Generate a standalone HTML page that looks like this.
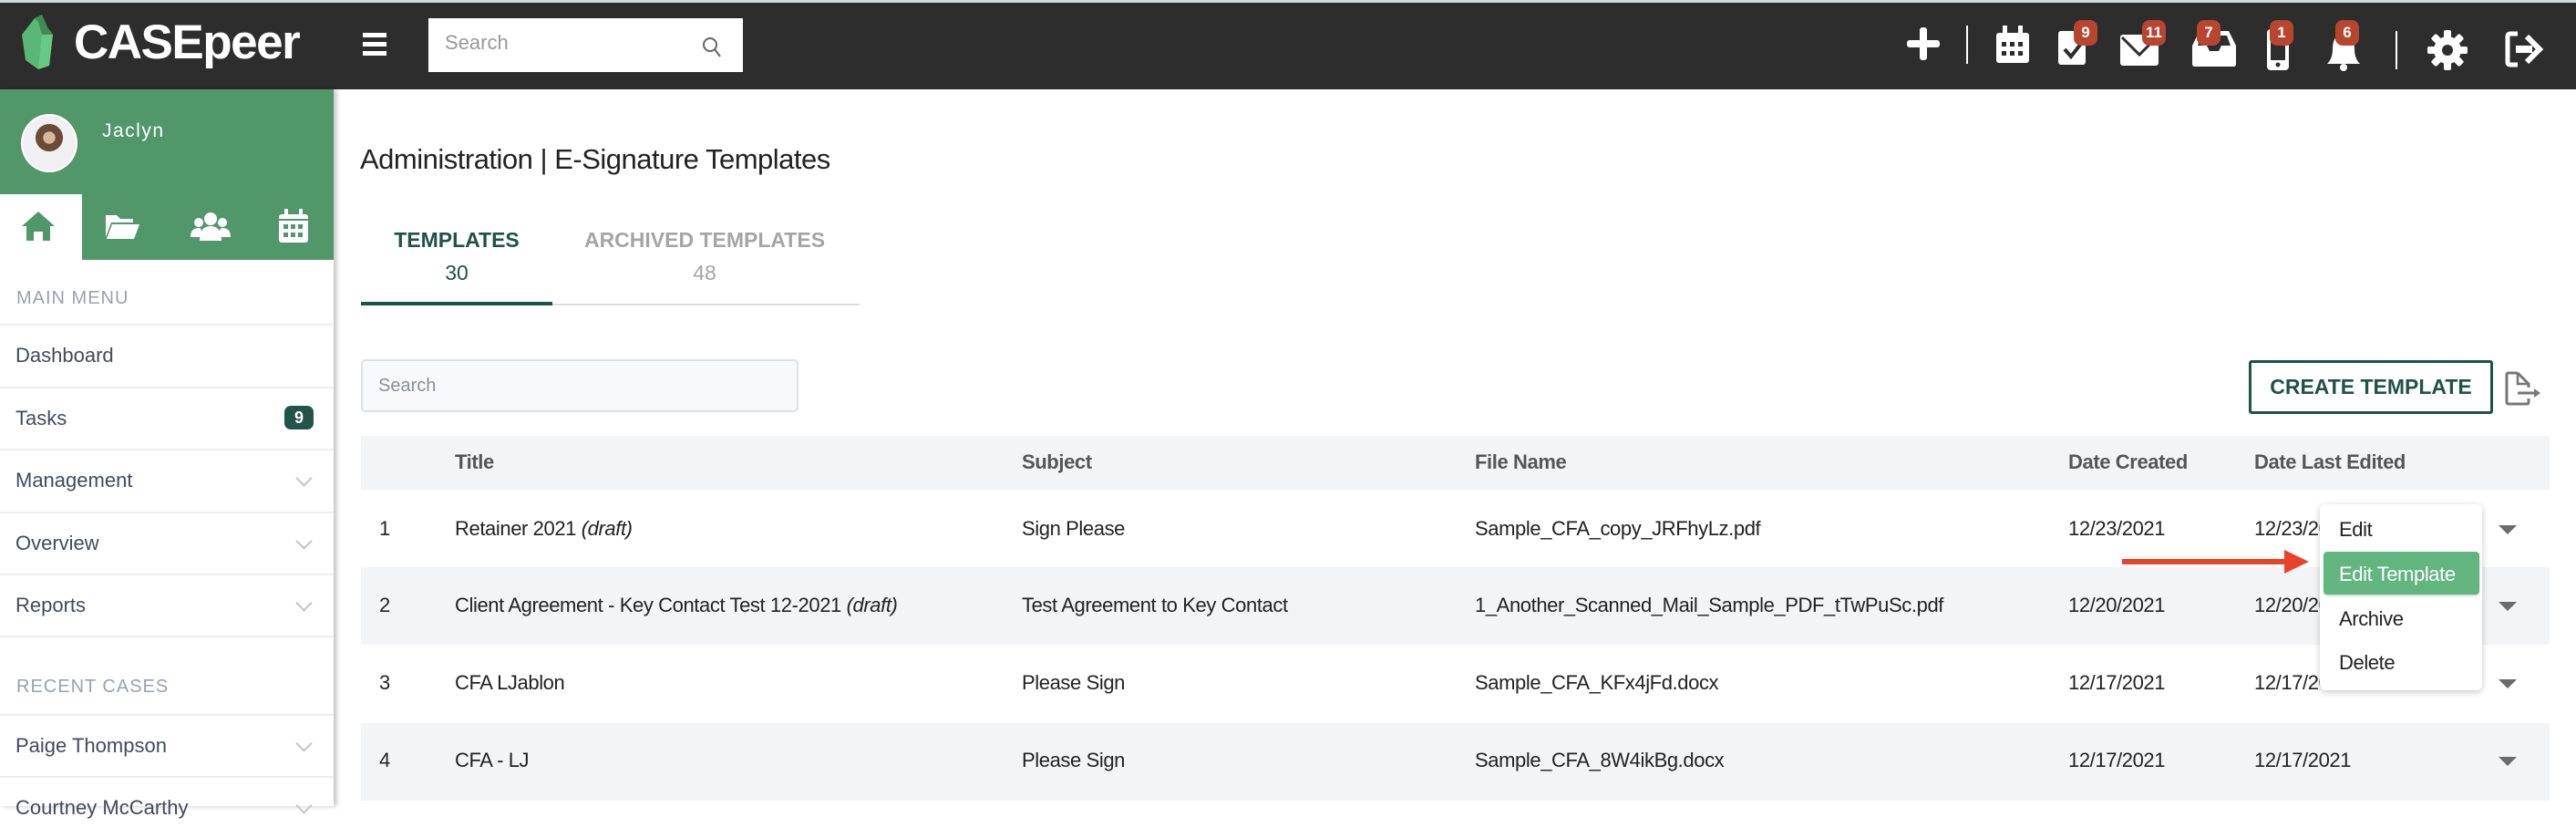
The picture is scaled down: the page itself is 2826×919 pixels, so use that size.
<!DOCTYPE html>
<html><head><meta charset="utf-8">
<style>
*{box-sizing:border-box;margin:0;padding:0}
body{width:2826px;height:884px;overflow:hidden;background:#fff;font-family:"Liberation Sans",sans-serif;position:relative}
.abs{position:absolute}
.hdr{left:0;top:0;width:2826px;height:98px;background:#2d2d2d;border-top:3px solid #cfd8d8}
.logo{left:81px;top:16px;color:#fff;font-size:53px;font-weight:bold;letter-spacing:-1.5px}
.srch{left:470px;top:20px;width:345px;height:59px;background:#fff}
.srch span{position:absolute;left:18px;top:14px;font-size:22px;color:#999}
.side{left:0;top:98px;width:366px;height:786px;background:#fff;box-shadow:3px 0 5px rgba(0,0,0,.25)}
.green{left:0;top:98px;width:366px;height:187px;background:#51976a}
.mi{position:absolute;left:0;width:366px;height:68px;border-top:2px solid #eceef1;font-size:22px;color:#434a5e;padding-left:17px;line-height:66px}
.lbl{position:absolute;left:18px;font-size:20px;color:#9aa1b4;letter-spacing:1px}
.chev{position:absolute;right:26px;top:24px;width:13px;height:13px;border-right:2px solid #c0c4cc;border-bottom:2px solid #c0c4cc;transform:rotate(45deg)}
.t{position:absolute;font-size:22px;color:#222;letter-spacing:-0.4px;white-space:nowrap}
.th{position:absolute;font-size:22px;color:#555;font-weight:bold;letter-spacing:-0.4px}
.car{position:absolute;left:2741px;width:0;height:0;border-left:10px solid transparent;border-right:10px solid transparent;border-top:10px solid #6b6b6b}
.badge{position:absolute;background:#b8452f;color:#fff;font-size:17px;font-weight:bold;border-radius:8px;height:28px;min-width:26px;text-align:center;line-height:28px;padding:0 4px}
</style></head><body>
<div class="abs hdr"></div>
<svg class="abs" style="left:22px;top:16px" width="44" height="62" viewBox="0 0 44 62"><polygon points="16,4 24,0 30,14 36,22 32,56 20,60 6,50 2,22" fill="#5bb874"/><polygon points="16,4 24,0 30,14 36,22 24,22 20,8" fill="#3f8d56"/><polygon points="24,22 36,22 32,56 20,60" fill="#68c985"/></svg>
<div class="abs logo">CASEpeer</div>
<div class="abs" style="left:398px;top:36px;width:26px;height:5px;background:#fff"></div>
<div class="abs" style="left:398px;top:46px;width:26px;height:5px;background:#fff"></div>
<div class="abs" style="left:398px;top:56px;width:26px;height:5px;background:#fff"></div>
<div class="abs srch"><span>Search</span><svg style="position:absolute;left:300px;top:20px" width="22" height="24"><circle cx="9" cy="9" r="7" stroke="#666" stroke-width="2" fill="none"/><line x1="14" y1="14" x2="20" y2="22" stroke="#666" stroke-width="2"/></svg></div>
<!-- right icons -->
<svg class="abs" style="left:2090px;top:28px" width="40" height="40"><rect x="16" y="2" width="8" height="36" rx="3" fill="#fff"/><rect x="2" y="16" width="36" height="8" rx="3" fill="#fff"/></svg>
<div class="abs" style="left:2157px;top:28px;width:2px;height:42px;background:#fff"></div>
<svg class="abs" style="left:2190px;top:28px" width="38" height="42"><rect x="0" y="8" width="36" height="33" rx="3" fill="#fff"/><rect x="7" y="0" width="5" height="10" fill="#fff"/><rect x="24" y="0" width="5" height="10" fill="#fff"/><g fill="#2d2d2d"><rect x="6" y="18" width="5" height="5"/><rect x="15" y="18" width="5" height="5"/><rect x="24" y="18" width="5" height="5"/><rect x="6" y="28" width="5" height="5"/><rect x="15" y="28" width="5" height="5"/><rect x="24" y="28" width="5" height="5"/></g></svg>
<svg class="abs" style="left:2258px;top:34px" width="36" height="38"><rect x="0" y="0" width="30" height="37" rx="3" fill="#fff"/><polyline points="7,20 14,28 28,10" stroke="#2d2d2d" stroke-width="4" fill="none"/></svg>
<div class="badge" style="left:2275px;top:22px">9</div>
<svg class="abs" style="left:2326px;top:38px" width="44" height="36"><rect x="0" y="0" width="42" height="34" rx="3" fill="#fff"/><polyline points="2,3 21,22 40,3" stroke="#2d2d2d" stroke-width="3" fill="none"/></svg>
<div class="badge" style="left:2350px;top:22px">11</div>
<svg class="abs" style="left:2405px;top:34px" width="48" height="40"><path d="M8 0 H40 L48 16 V36 Q48 39 45 39 H3 Q0 39 0 36 V16 Z" fill="#fff"/><path d="M10 5 H38 L42 16 H32 L29 22 H19 L16 16 H6 Z" fill="#2d2d2d"/></svg>
<div class="badge" style="left:2410px;top:22px">7</div>
<svg class="abs" style="left:2487px;top:32px" width="26" height="46"><rect x="0" y="0" width="24" height="45" rx="4" fill="#fff"/><rect x="4" y="6" width="16" height="28" fill="#2d2d2d"/><circle cx="12" cy="39" r="2.5" fill="#2d2d2d"/></svg>
<div class="badge" style="left:2490px;top:22px">1</div>
<svg class="abs" style="left:2553px;top:34px" width="36" height="44"><path d="M18 2 Q6 4 6 20 Q6 30 0 36 H36 Q30 30 30 20 Q30 4 18 2Z" fill="#fff"/><circle cx="18" cy="40" r="4" fill="#fff"/></svg>
<div class="badge" style="left:2562px;top:22px">6</div>
<div class="abs" style="left:2628px;top:34px;width:2px;height:42px;background:#fff"></div>
<svg class="abs" style="left:2663px;top:33px" width="44" height="44" viewBox="0 0 44 44"><g fill="#fff"><circle cx="22" cy="22" r="15"/><rect x="18" y="0" width="8" height="44" rx="2"/><rect x="0" y="18" width="44" height="8" rx="2"/><rect x="18" y="0" width="8" height="44" rx="2" transform="rotate(45 22 22)"/><rect x="18" y="0" width="8" height="44" rx="2" transform="rotate(-45 22 22)"/></g><circle cx="22" cy="22" r="6" fill="#2d2d2d"/></svg>
<svg class="abs" style="left:2748px;top:34px" width="44" height="40"><path d="M14 3 H6 Q3 3 3 6 V34 Q3 37 6 37 H14" stroke="#fff" stroke-width="5" fill="none"/><rect x="12" y="16" width="18" height="8" fill="#fff"/><polyline points="24,6 38,20 24,34" stroke="#fff" stroke-width="6" fill="none"/></svg>

<!-- sidebar -->
<div class="abs side"></div>
<div class="abs green"></div>
<div class="abs" style="left:23px;top:125px;width:62px;height:64px;border-radius:50%;background:radial-gradient(circle at 50% 40%,#d8b79c 0 14%,#6b4a38 15% 32%,#f0f0f2 33%);border:2px solid #fff"></div>
<div class="abs" style="left:112px;top:132px;font-size:21px;color:#fff;letter-spacing:1.5px">Jaclyn</div>
<div class="abs" style="left:0;top:213px;width:90px;height:72px;background:#fff"></div>
<svg class="abs" style="left:22px;top:230px" width="40" height="36"><path d="M20 2 L38 18 H33 V34 H25 V24 H15 V34 H7 V18 H2 Z" fill="#51976a"/></svg>
<svg class="abs" style="left:114px;top:232px" width="40" height="32"><path d="M2 4 H14 L18 8 H32 V12 H8 L2 28 Z" fill="#fff"/><path d="M9 14 H39 L33 30 H3 Z" fill="#fff"/></svg>
<svg class="abs" style="left:209px;top:232px" width="44" height="34"><g fill="#fff"><circle cx="22" cy="8" r="7"/><circle cx="9" cy="12" r="5"/><circle cx="35" cy="12" r="5"/><path d="M10 32 Q10 16 22 16 Q34 16 34 32Z"/><path d="M0 28 Q0 18 9 18 Q12 18 12 22 L10 28Z"/><path d="M44 28 Q44 18 35 18 Q32 18 32 22 L34 28Z"/></g></svg>
<svg class="abs" style="left:306px;top:229px" width="34" height="38"><rect x="0" y="6" width="32" height="31" rx="3" fill="#fff"/><rect x="6" y="0" width="4" height="9" fill="#fff"/><rect x="22" y="0" width="4" height="9" fill="#fff"/><g fill="#51976a"><rect x="0" y="11" width="32" height="2"/><rect x="5" y="17" width="5" height="5"/><rect x="13" y="17" width="5" height="5"/><rect x="21" y="17" width="5" height="5"/><rect x="5" y="26" width="5" height="5"/><rect x="13" y="26" width="5" height="5"/><rect x="21" y="26" width="5" height="5"/></g></svg>
<div class="lbl" style="top:316px">MAIN MENU</div>
<div class="mi" style="top:355px">Dashboard</div>
<div class="mi" style="top:424px">Tasks<span style="position:absolute;left:312px;top:19px;width:32px;height:26px;background:#22544a;border-radius:7px;color:#fff;font-size:18px;font-weight:bold;text-align:center;line-height:26px">9</span></div>
<div class="mi" style="top:492px">Management<i class="chev"></i></div>
<div class="mi" style="top:561px">Overview<i class="chev"></i></div>
<div class="mi" style="top:629px">Reports<i class="chev"></i></div>
<div class="mi" style="top:697px;height:2px"></div>
<div class="lbl" style="top:742px">RECENT CASES</div>
<div class="mi" style="top:783px">Paige Thompson<i class="chev"></i></div>
<div class="mi" style="top:851px">Courtney McCarthy<i class="chev"></i></div>

<!-- main -->
<div class="abs" style="left:395px;top:157px;font-size:31px;color:#222;letter-spacing:-0.5px">Administration | E-Signature Templates</div>
<div class="abs" style="left:396px;top:250px;width:210px;text-align:center;font-size:23px;font-weight:bold;color:#1f5248">TEMPLATES</div>
<div class="abs" style="left:396px;top:286px;width:210px;text-align:center;font-size:23px;color:#1f5248">30</div>
<div class="abs" style="left:606px;top:250px;width:334px;text-align:center;font-size:23px;font-weight:bold;color:#a5a5a5">ARCHIVED TEMPLATES</div>
<div class="abs" style="left:606px;top:286px;width:334px;text-align:center;font-size:23px;color:#a5a5a5">48</div>
<div class="abs" style="left:396px;top:333px;width:547px;height:2px;background:#ddd"></div>
<div class="abs" style="left:396px;top:331px;width:210px;height:4px;background:#1f5248"></div>
<div class="abs" style="left:396px;top:394px;width:480px;height:58px;border:2px solid #dde1e4;border-radius:5px;background:#f8f9fa"><span style="position:absolute;left:17px;top:16px;font-size:20px;color:#8a8f98">Search</span></div>
<div class="abs" style="left:2467px;top:395px;width:268px;height:59px;border:3px solid #1f5248;border-radius:3px;text-align:center;line-height:53px;font-size:23px;font-weight:bold;color:#1f5248">CREATE TEMPLATE</div>
<svg class="abs" style="left:2748px;top:407px" width="40" height="40" viewBox="0 0 40 40"><path d="M14 2 H4 Q2 2 2 4 V34 Q2 36 4 36 H24 Q26 36 26 34 V30" stroke="#777" stroke-width="3" fill="none"/><path d="M14 2 L26 14 V18" stroke="#777" stroke-width="3" fill="none"/><path d="M14 2 V14 H26" stroke="#777" stroke-width="2.5" fill="none"/><line x1="14" y1="24" x2="36" y2="24" stroke="#777" stroke-width="3"/><polygon points="32,19 39,24 32,29" fill="#777"/></svg>

<div class="abs" style="left:396px;top:478px;width:2401px;height:59px;background:#f3f4f6"></div>
<div class="abs" style="left:396px;top:622px;width:2401px;height:85px;background:#f3f4f6"></div>
<div class="abs" style="left:396px;top:793px;width:2401px;height:85px;background:#f3f4f6"></div>
<div class="th" style="left:499px;top:494px">Title</div>
<div class="th" style="left:1121px;top:494px">Subject</div>
<div class="th" style="left:1618px;top:494px">File Name</div>
<div class="th" style="left:2269px;top:494px">Date Created</div>
<div class="th" style="left:2473px;top:494px">Date Last Edited</div>

<div class="t" style="left:416px;top:567px">1</div>
<div class="t" style="left:499px;top:567px">Retainer 2021 <i>(draft)</i></div>
<div class="t" style="left:1121px;top:567px">Sign Please</div>
<div class="t" style="left:1618px;top:567px">Sample_CFA_copy_JRFhyLz.pdf</div>
<div class="t" style="left:2269px;top:567px">12/23/2021</div>
<div class="t" style="left:2473px;top:567px">12/23/2021</div>
<div class="car" style="top:576px"></div>

<div class="t" style="left:416px;top:651px">2</div>
<div class="t" style="left:499px;top:651px">Client Agreement - Key Contact Test 12-2021 <i>(draft)</i></div>
<div class="t" style="left:1121px;top:651px">Test Agreement to Key Contact</div>
<div class="t" style="left:1618px;top:651px">1_Another_Scanned_Mail_Sample_PDF_tTwPuSc.pdf</div>
<div class="t" style="left:2269px;top:651px">12/20/2021</div>
<div class="t" style="left:2473px;top:651px">12/20/2021</div>
<div class="car" style="top:660px"></div>

<div class="t" style="left:416px;top:736px">3</div>
<div class="t" style="left:499px;top:736px">CFA LJablon</div>
<div class="t" style="left:1121px;top:736px">Please Sign</div>
<div class="t" style="left:1618px;top:736px">Sample_CFA_KFx4jFd.docx</div>
<div class="t" style="left:2269px;top:736px">12/17/2021</div>
<div class="t" style="left:2473px;top:736px">12/17/2021</div>
<div class="car" style="top:745px"></div>

<div class="t" style="left:416px;top:821px">4</div>
<div class="t" style="left:499px;top:821px">CFA - LJ</div>
<div class="t" style="left:1121px;top:821px">Please Sign</div>
<div class="t" style="left:1618px;top:821px">Sample_CFA_8W4ikBg.docx</div>
<div class="t" style="left:2269px;top:821px">12/17/2021</div>
<div class="t" style="left:2473px;top:821px">12/17/2021</div>
<div class="car" style="top:830px"></div>

<!-- dropdown -->
<div class="abs" style="left:2545px;top:553px;width:178px;height:204px;background:#fff;border-radius:6px;box-shadow:0 2px 8px rgba(0,0,0,.22)"></div>
<div class="t" style="left:2566px;top:568px">Edit</div>
<div class="abs" style="left:2549px;top:605px;width:171px;height:47px;background:#62b57f;border-radius:4px;box-shadow:0 2px 2px rgba(0,0,0,.15)"></div>
<div class="t" style="left:2566px;top:617px;color:#fff">Edit Template</div>
<div class="t" style="left:2566px;top:666px">Archive</div>
<div class="t" style="left:2566px;top:714px">Delete</div>
<!-- arrow -->
<div class="abs" style="left:2328px;top:613px;width:182px;height:6px;background:#e8432a"></div>
<svg class="abs" style="left:2506px;top:603px" width="28" height="26"><polygon points="0,0 27,13 0,26" fill="#e8432a"/></svg>
</body></html>
